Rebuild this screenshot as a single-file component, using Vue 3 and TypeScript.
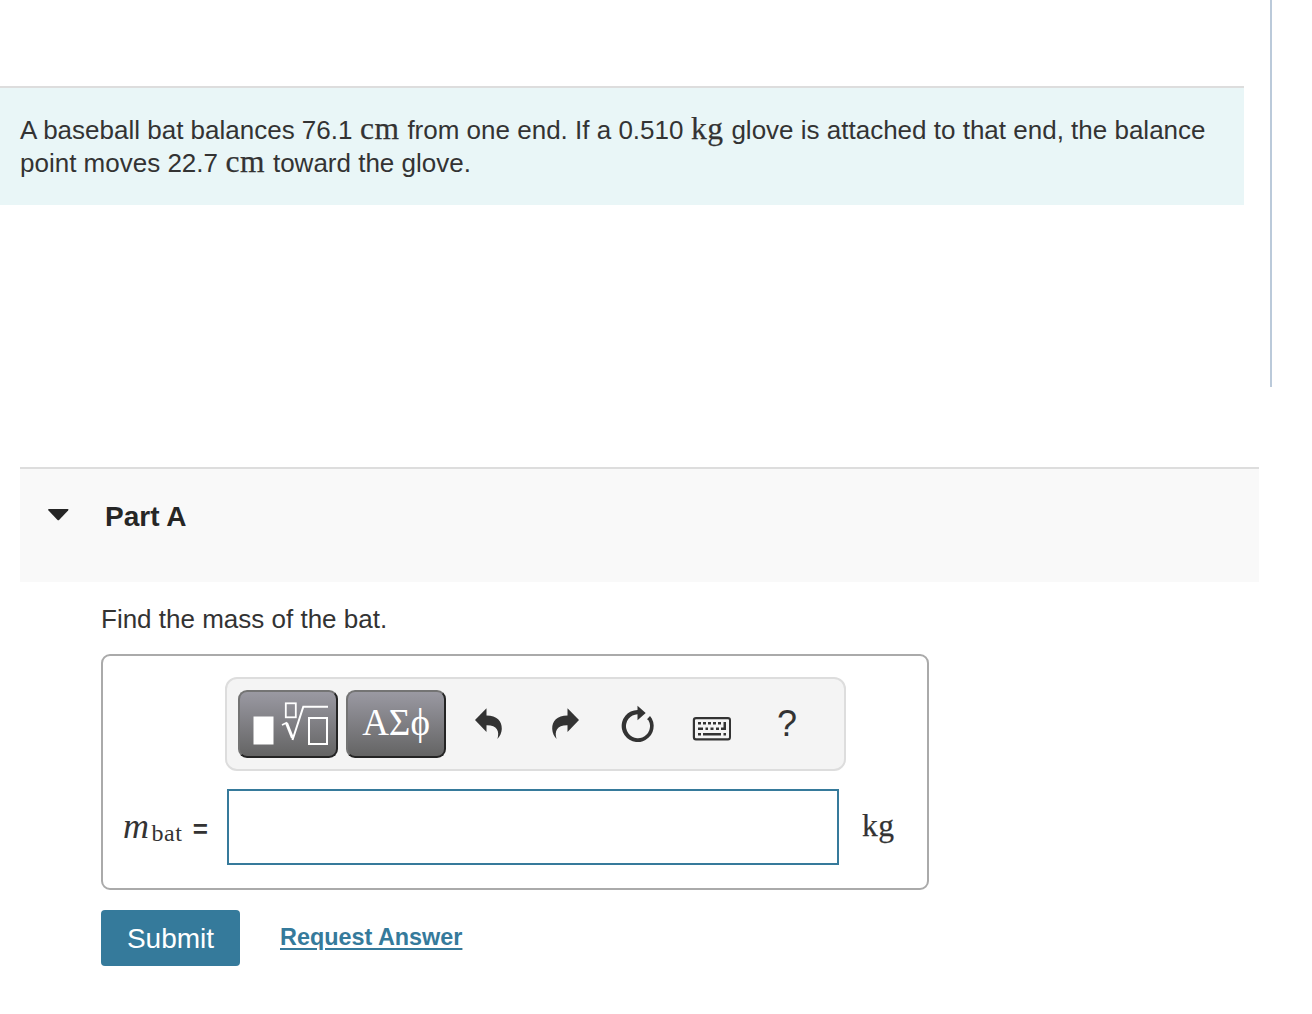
<template>
  <div class="page">
    <div class="upper">
      <section class="problem">
        A baseball bat balances 76.1 <span class="math">cm</span> from one end. If a 0.510 <span class="math">kg</span> glove is attached to that end, the balance<br />
        point moves 22.7 <span class="math">cm</span> toward the glove.
      </section>
    </div>

    <!-- Part header -->
    <header class="part-header" @click="expanded = !expanded">
      <svg class="caret" :class="{ collapsed: !expanded }" width="22" height="13" viewBox="0 0 22 13">
        <path d="M1.9 1H20.7Q22.1 1.3 21.1 2.4L12.3 11.8Q11.3 12.8 10.3 11.8L1.5 2.4Q.5 1.3 1.9 1Z" fill="#262626" />
      </svg>
      <h2>Part A</h2>
    </header>

    <main v-if="expanded" class="part-body">
      <p class="question">Find the mass of the bat.</p>

      <div class="answer-box">
        <!-- Equation toolbar -->
        <div class="toolbar">
          <button class="key" type="button" aria-label="Templates">
            <svg width="96" height="64" viewBox="0 0 96 64" fill="none" stroke="#fff">
              <rect x="13.5" y="24.5" width="20" height="28" fill="#fff" stroke="none" />
              <rect x="45.8" y="11.3" width="10" height="14" stroke-width="1.8" />
              <path d="M42 33L47 30.5" stroke-width="1.6" />
              <path d="M46.5 31L52.5 46" stroke-width="3" />
              <path d="M52.5 48L63.3 14.8H88" stroke-width="2" />
              <rect x="69" y="26" width="18" height="26" stroke-width="2" />
            </svg>
          </button>
          <button class="key greek" type="button">ΑΣϕ</button>
          <button
            v-for="tool in tools"
            :key="tool.name"
            class="tool"
            type="button"
            :aria-label="tool.name"
          >
            <svg width="44" height="44" viewBox="0 0 44 44">
              <path :d="tool.path" fill="#333" fill-rule="evenodd" />
            </svg>
          </button>
          <button class="tool help" type="button">?</button>
        </div>

        <!-- Answer input -->
        <div class="answer-row">
          <label class="variable" for="answer"><i>m</i><span class="sub">bat</span><span class="equals">=</span></label>
          <input id="answer" v-model="answer" type="text" autocomplete="off" />
          <span class="math unit">kg</span>
        </div>
      </div>

      <div class="actions">
        <button class="submit" type="button">Submit</button>
        <a class="request" href="#" @click.prevent>Request Answer</a>
      </div>
    </main>
  </div>
</template>

<script setup lang="ts">
import { ref } from 'vue'

interface Tool {
  name: string
  path: string
}

const answer = ref('')
const expanded = ref(true)

const tools: Tool[] = [
  {
    name: 'undo',
    path: 'M8 18L19.5 6.3V13.6C30 13.6 35 19 34.8 27C34.6 31 33 34 30.4 37C32.8 29 30 23 19.5 23.2V30Z'
  },
  {
    name: 'redo',
    path: 'M37 18L25.5 6.3V13.6C15 13.6 10 19 10.2 27C10.4 31 12 34 14.6 37C12.2 29 15 23 25.5 23.2V30Z'
  },
  {
    name: 'reset',
    path: 'M20.5 3.7L28.7 11L20.5 18.3V12.2A12 12 0 1 0 31.4 18.2L30 17.3L33 14L34.8 16.5A16 16 0 1 1 20.5 8Z'
  },
  {
    name: 'keyboard shortcuts',
    path:
      'M4 15H36Q39 15 39 18V35Q39 38.5 36 38.5H4Q.8 38.5 .8 35V18Q.8 15 4 15ZM4 17.2Q3 17.2 3 18.2V35.2Q3 36.3 4 36.3H36Q37 36.3 37 35.2V18.2Q37 17.2 36 17.2Z' +
      'M6 20H9V22.5H6ZM11 20H14V22.5H11ZM16 20H19V22.5H16ZM21 20H24V22.5H21ZM26 20H29V22.5H26ZM31.5 20H34V28H29V25.5H31.5Z' +
      'M6 25.5H11V28H6ZM13.5 25.5H16V28H13.5ZM18.5 25.5H21.5V28H18.5ZM24 25.5H27V28H24ZM6 31H9V33.5H6ZM11 31H29V33.5H11ZM31.5 31H34V33.5H31.5Z'
  }
]
</script>

<style>
body {
  margin: 0;
  background: #fff;
}
</style>

<style scoped>
.page {
  width: 1312px;
  height: 1014px;
  overflow: hidden;
  font-family: "Liberation Sans", Arial, sans-serif;
  font-size: 26px;
  color: #333;
}

.upper {
  box-sizing: border-box;
  width: 1272px;
  height: 387px;
  padding-top: 86px;
  border-right: 2px solid #bbcada;
}

.problem {
  box-sizing: border-box;
  width: 1244px;
  height: 119px;
  padding: 26px 20px 0;
  border-top: 2px solid #ddd;
  background: #e9f6f7;
  line-height: 33px;
  white-space: nowrap;
}

.math {
  margin: 0 0.7px 0 0.3px;
  font-family: "Liberation Serif", "Times New Roman", serif;
  font-size: 31.5px;
  letter-spacing: 0.5px;
  line-height: 0;
  -webkit-text-stroke: 0.25px #333;
}

.part-header {
  box-sizing: border-box;
  display: flex;
  align-items: flex-start;
  width: 1239px;
  height: 115px;
  margin: 80px 0 0 20px;
  padding: 32px 0 0 27px;
  border-top: 2px solid #ddd;
  background: #f9f9f9;
}

.caret {
  margin: 7px 36px 0 0;
}

.caret.collapsed {
  transform: rotate(-90deg);
}

h2 {
  margin: 0;
  font-size: 28px;
  line-height: 32px;
  color: #262626;
}

.part-body {
  margin-left: 101px;
}

.question {
  margin: 0;
  padding-top: 21px;
  line-height: 33px;
}

.answer-box {
  box-sizing: border-box;
  width: 828px;
  height: 236px;
  margin-top: 18px;
  padding: 21px 0 0 20px;
  border: 2px solid #aaa;
  border-radius: 9px;
}

.toolbar {
  box-sizing: border-box;
  display: flex;
  width: 621px;
  height: 94px;
  margin-left: 102px;
  padding: 11px;
  border: 2px solid #ddd;
  border-radius: 12px;
  background: #f4f4f4;
}

button {
  padding: 0;
  border: 0;
  font-family: inherit;
  cursor: pointer;
}

.key {
  box-sizing: border-box;
  width: 100px;
  height: 68px;
  margin-right: 8px;
  border: 2px solid;
  border-color: #747474 #242424 #242424 #747474;
  border-radius: 9px;
  background: linear-gradient(#9a99a2, #646464);
  color: #fff;
}

.key svg {
  display: block;
}

.greek {
  margin-right: 21px;
  padding-bottom: 3px;
  font-family: "Liberation Serif", "Times New Roman", serif;
  font-size: 37px;
}

.tool {
  width: 44px;
  height: 44px;
  margin: 12px 31px 0 0;
  background: none;
  color: #333;
}

.tool svg {
  display: block;
}

.help {
  margin-left: -2px;
  margin-right: 0;
  font-size: 36px;
}

.answer-row {
  display: flex;
  align-items: center;
  margin-top: 18px;
}

.variable {
  width: 104px;
  padding-bottom: 2px;
  white-space: nowrap;
  font-family: "Liberation Serif", "Times New Roman", serif;
  font-size: 36px;
}

.variable i {
  margin-right: 2.5px;
}

.sub {
  position: relative;
  top: 3px;
  font-size: 24px;
  letter-spacing: 0.6px;
}

.equals {
  margin-left: 10px;
  font-family: "Liberation Sans", Arial, sans-serif;
  font-size: 26px;
  font-weight: bold;
}

input {
  box-sizing: border-box;
  width: 612px;
  height: 76px;
  padding: 0 12px;
  border: 2px solid #367a9b;
  background: #fff;
  font-size: 28px;
  outline: none;
}

.unit {
  margin-left: 23px;
  padding-bottom: 2px;
}

.actions {
  display: flex;
  align-items: center;
  margin-top: 20px;
}

.submit {
  width: 139px;
  height: 56px;
  padding-top: 1px;
  border-radius: 4px;
  background: #357a9b;
  color: #fff;
  font-size: 28px;
}

.request {
  margin-left: 40px;
  padding-bottom: 2px;
  color: #357a9b;
  font-size: 23.4px;
  font-weight: bold;
  text-decoration-thickness: 2px;
  text-underline-offset: 3px;
}
</style>
